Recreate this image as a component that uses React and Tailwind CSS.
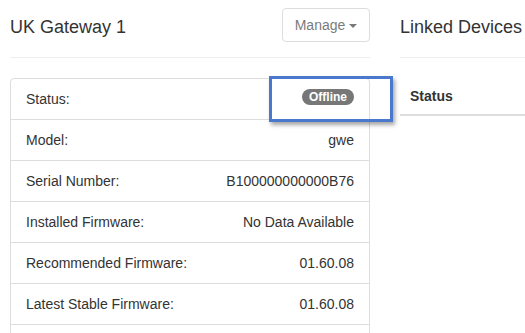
export default function App() {
  const rows = [
    ["Model:", "gwe"],
    ["Serial Number:", "B100000000000B76"],
    ["Installed Firmware:", "No Data Available"],
    ["Recommended Firmware:", "01.60.08"],
    ["Latest Stable Firmware:", "01.60.08"],
    ["", ""],
  ];
  return (
    <div className="relative w-[525px] h-[333px] overflow-hidden bg-white text-[14px] leading-[20px] text-[#333] font-['Liberation_Sans',Arial,sans-serif]">
      <div className="flex pl-[10px] gap-[30px]">
        <div className="w-[360px] shrink-0">
          <div className="h-[58px] border-b border-[#eee] flex justify-between items-start">
            <h3 className="mt-[17px] text-[18px] leading-[20px] font-normal">UK Gateway 1</h3>
            <button className="mt-[8px] h-[34px] w-[88px] flex items-center justify-center border border-[#ccc] rounded-[4px] bg-white opacity-65 text-[#333] text-[14px] cursor-not-allowed">
              Manage
              <span className="ml-[4px] mt-[1px] w-0 h-0 border-t-[4px] border-t-[#333] border-x-[4px] border-x-transparent"></span>
            </button>
          </div>
          <div className="mt-[20px] flex flex-col">
            <div className="flex justify-between items-start px-[15px] py-[10px] border border-[#ddd] rounded-t-[4px] h-[42px]">
              <span>Status:</span>
              <span className="mt-0 h-[16px] px-[7px] rounded-[10px] bg-[#777] text-white text-[12px] leading-[16px] font-bold">Offline</span>
            </div>
            {rows.map(([k, v], i) => (
              <div key={i} className="flex justify-between px-[15px] py-[10px] border border-[#ddd] -mt-px h-[42px]">
                <span>{k}</span>
                <span>{v}</span>
              </div>
            ))}
          </div>
        </div>
        <div className="flex-1 min-w-0">
          <div className="h-[58px] border-b border-[#eee] whitespace-nowrap">
            <h3 className="pt-[17px] text-[18px] leading-[20px] font-normal">Linked Devices</h3>
          </div>
          <div className="mt-[20px] border-b-2 border-[#ddd] px-[10px] py-[8px] font-bold whitespace-nowrap">Status</div>
        </div>
      </div>
      <div className="absolute left-[269px] top-[76px] w-[124px] h-[46px] border-[3px] border-[#4a78cc] shadow-[2px_3px_4px_rgba(0,0,0,0.35)]"></div>
    </div>
  );
}
